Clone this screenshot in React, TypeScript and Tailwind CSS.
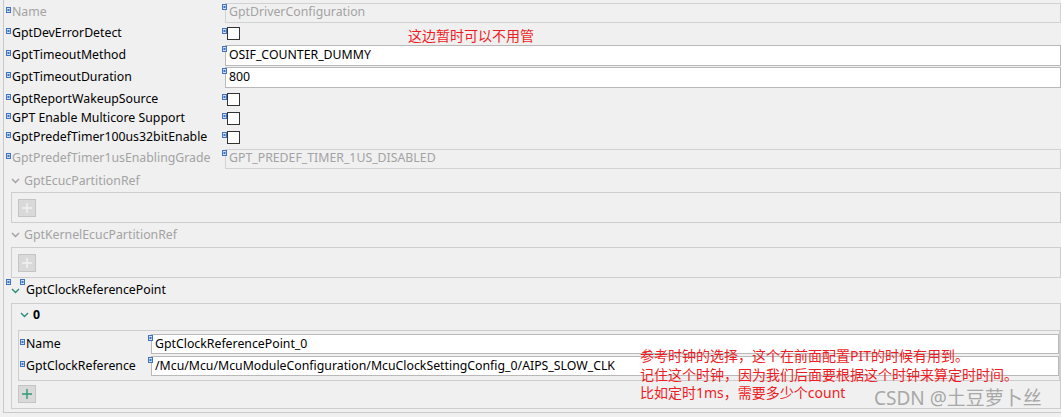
import React from 'react';

const Deco: React.FC<{ overlap?: boolean }> = ({ overlap }) => (
  <svg
    width="5"
    height="6"
    viewBox="0 0 5 6"
    className={`shrink-0 self-start mt-[1px] ${overlap ? 'mr-[-2px] relative z-10' : ''}`}
  >
    <rect x="0.5" y="0.5" width="4" height="5" fill="#cfe0f5" stroke="#3f74c0" strokeWidth="1" />
    <rect x="1.5" y="2" width="2" height="2" fill="#3f74c0" />
  </svg>
);

const Chevron: React.FC<{ color: string }> = ({ color }) => (
  <svg width="9" height="6" viewBox="0 0 9 6" className="shrink-0">
    <path d="M1 1 L4.5 4.5 L8 1" fill="none" stroke={color} strokeWidth="1.4" />
  </svg>
);

const Check: React.FC = () => (
  <div className="w-[13px] h-[13px] bg-white border border-[#333] ml-[2px]" />
);

const PlusBtn: React.FC<{ enabled?: boolean }> = ({ enabled }) => (
  <div className="w-[18px] h-[18px] bg-[#d9d9d9] border border-[#c4c4c4] flex items-center justify-center">
    <svg width="12" height="12" viewBox="0 0 12 12">
      <path d="M6 1 V11 M1 6 H11" stroke={enabled ? '#2e9a76' : '#f2f2f2'} strokeWidth="1.4" />
    </svg>
  </div>
);

interface Row {
  label: string;
  kind: 'check' | 'input' | 'disabled';
  value?: string;
  disabledLabel?: boolean;
  h: string;
}

const rows: Row[] = [
  { label: 'Name', kind: 'disabled', value: 'GptDriverConfiguration', disabledLabel: true, h: 'h-[21px]' },
  { label: 'GptDevErrorDetect', kind: 'check', h: 'h-[21px]' },
  { label: 'GptTimeoutMethod', kind: 'input', value: 'OSIF_COUNTER_DUMMY', h: 'h-[22px]' },
  { label: 'GptTimeoutDuration', kind: 'input', value: '800', h: 'h-[23px]' },
  { label: 'GptReportWakeupSource', kind: 'check', h: 'h-[20px]' },
  { label: 'GPT Enable Multicore Support', kind: 'check', h: 'h-[19px]' },
  { label: 'GptPredefTimer100us32bitEnable', kind: 'check', h: 'h-[19px]' },
  { label: 'GptPredefTimer1usEnablingGrade', kind: 'disabled', value: 'GPT_PREDEF_TIMER_1US_DISABLED', disabledLabel: true, h: 'h-[23px]' },
];

const FieldRow: React.FC<{ row: Row }> = ({ row }) => (
  <div className={`flex items-center ${row.h}`}>
    <div className="w-[218px] flex items-center gap-[1px] pl-[2px]">
      <Deco />
      <span className={row.disabledLabel ? 'text-[#a3a3a3]' : 'text-black'}>{row.label}</span>
    </div>
    <div className="flex-1 flex items-center">
      <Deco overlap />
      {row.kind === 'check' && <Check />}
      {row.kind === 'input' && (
        <div className="flex-1 h-[21px] bg-white border border-[#b9b9b9] flex items-center pl-[3px] text-black">
          {row.value}
        </div>
      )}
      {row.kind === 'disabled' && (
        <div className="flex-1 h-[20px] bg-[#f0f0f0] border border-[#d2d2d2] flex items-center pl-[3px] text-[#a3a3a3]">
          {row.value}
        </div>
      )}
    </div>
  </div>
);

const RefSection: React.FC<{ title: string; top: string }> = ({ title, top }) => (
  <>
    <div className={`flex items-center gap-[4px] pl-[7px] ${top} text-[#a3a3a3]`}>
      <Chevron color="#a0a0a0" />
      <span>{title}</span>
    </div>
    <div className="ml-[7px] h-[31px] border border-[#cdcdcd] flex items-center pl-[6px]">
      <PlusBtn />
    </div>
  </>
);

const SubRow: React.FC<{ label: string; value: string }> = ({ label, value }) => (
  <div className="flex items-center h-[22px]">
    <div className="w-[129px] flex items-center gap-[1px] pl-[1px]">
      <Deco />
      <span>{label}</span>
    </div>
    <div className="flex-1 flex items-center">
      <Deco overlap />
      <div className="flex-1 h-[20px] bg-white border border-[#b9b9b9] flex items-center pl-[3px]">
        {value}
      </div>
    </div>
  </div>
);

export default function App() {
  return (
    <div
      className="w-[1061px] h-[417px] bg-[#f0f0f0] relative overflow-hidden text-[12.3px] leading-none"
      style={{ fontFamily: '"Noto Sans", "Noto Sans CJK SC", sans-serif' }}
    >
      <div className="ml-[3px] h-[413px] border-l border-b border-[#c9c9c9] pt-[2px]">
        {rows.map(r => (
          <FieldRow key={r.label} row={r} />
        ))}

        <RefSection title="GptEcucPartitionRef" top="h-[22px]" />
        <RefSection title="GptKernelEcucPartitionRef" top="h-[24px]" />

        {/* GptClockReferencePoint */}
        <div className="flex items-center h-[25px] pl-[2px]">
          <Deco />
          <Chevron color="#2e8a78" />
          <Deco />
          <span className="text-black ml-[1px]">GptClockReferencePoint</span>
        </div>
        <div className="ml-[7px] h-[106px] border border-[#cdcdcd]">
          <div className="flex items-center gap-[4px] h-[22px] pl-[8px]">
            <Chevron color="#2e8a78" />
            <span className="font-bold text-black">0</span>
          </div>
          <div className="ml-[6px] mt-[4px] h-[51px] border border-[#cdcdcd] pt-[2px]">
            <SubRow label="Name" value="GptClockReferencePoint_0" />
            <SubRow
              label="GptClockReference"
              value="/Mcu/Mcu/McuModuleConfiguration/McuClockSettingConfig_0/AIPS_SLOW_CLK"
            />
          </div>
          <div className="ml-[6px] mt-[4px]">
            <PlusBtn enabled />
          </div>
        </div>
      </div>

      {/* annotations */}
      <div className="absolute left-[408px] top-[27px] text-[14px] leading-[18px] text-[#ee1c25]">
        这边暂时可以不用管
      </div>
      <div className="absolute left-[640px] top-[347px] text-[14px] leading-[18.5px] text-[#ee1c25]">
        <div>参考时钟的选择，这个在前面配置PIT的时候有用到。</div>
        <div>记住这个时钟，因为我们后面要根据这个时钟来算定时时间。</div>
        <div>比如定时1ms，需要多少个count</div>
      </div>
      <div className="absolute left-[874px] top-[388px] text-[19px] leading-[20px] text-[#a8a8a8]">
        CSDN @土豆萝卜丝
      </div>
    </div>
  );
}
